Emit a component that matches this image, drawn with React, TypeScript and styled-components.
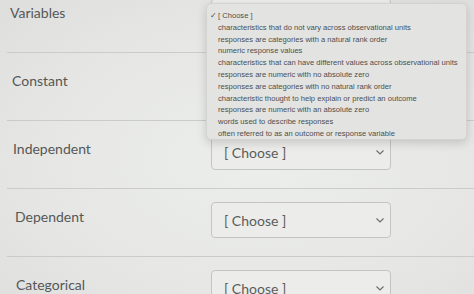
import React from "react";
import styled, { createGlobalStyle } from "styled-components";

const Global = createGlobalStyle`
  html, body { margin: 0; padding: 0; }
  body {
    width: 474px;
    height: 294px;
    overflow: hidden;
    background: #e7e8e6;
    font-family: Lato, "Open Sans", sans-serif;
  }
`;

const Page = styled.div`
  position: relative;
  width: 474px;
  height: 294px;
  overflow: hidden;
  background: radial-gradient(ellipse at 55% 55%, #eceeec 0%, #e6e7e5 60%, #dedfdd 100%);
`;

const List = styled.div`
  display: flex;
  flex-direction: column;
  margin-top: -15px;
`;

const Row = styled.div`
  display: grid;
  grid-template-columns: 204px 180px;
  align-items: start;
  height: 67px;
  margin-left: 7px;
  border-bottom: 1px solid #cbccca;
`;

const Label = styled.div<{ $indent: number }>`
  margin-top: 10px;
  padding-left: ${(p) => p.$indent}px;
  line-height: 36px;
  font-size: 14px;
  color: #555756;
`;

const Select = styled.div`
  margin-top: 13px;
  box-sizing: border-box;
  height: 36px;
  border: 1px solid #c4c5c3;
  border-radius: 4px;
  background: #ecedeb;
  display: flex;
  align-items: center;
  justify-content: space-between;
  padding: 0 5px 0 12px;
  font-size: 14px;
  color: #5b5c5b;
`;

const Menu = styled.div`
  position: absolute;
  left: 206px;
  top: 3px;
  width: 261px;
  height: 137px;
  box-sizing: border-box;
  padding: 6px 0 0 11px;
  background: #e3e4e2;
  border: 1px solid #d3d4d2;
  border-radius: 5px;
  box-shadow: 0 3px 10px rgba(0, 0, 0, 0.16);
  font-family: "Liberation Sans", Arial, sans-serif;
  font-size: 7.6px;
  color: #4d4e4d;
`;

const Item = styled.div`
  position: relative;
  line-height: 11.8px;
  white-space: nowrap;
`;

const Check = styled.span`
  position: absolute;
  left: -8px;
  top: 0;
`;

const Chevron = () => (
  <svg width="10" height="7" viewBox="0 0 10 7">
    <path d="M1.5 1.5 L5 5 L8.5 1.5" fill="none" stroke="#6a6b6a" strokeWidth="1.1" />
  </svg>
);

const rows = [
  { label: "Variables", indent: 3 },
  { label: "Constant", indent: 5 },
  { label: "Independent", indent: 6 },
  { label: "Dependent", indent: 8 },
  { label: "Categorical", indent: 9 },
];

const options = [
  "characteristics that do not vary across observational units",
  "responses are categories with a natural rank order",
  "numeric response values",
  "characteristics that can have different values across observational units",
  "responses are numeric with no absolute zero",
  "responses are categories with no natural rank order",
  "characteristic thought to help explain or predict an outcome",
  "responses are numeric with an absolute zero",
  "words used to describe responses",
  "often referred to as an outcome or response variable",
];

export default function App() {
  return (
    <>
      <Global />
      <Page>
        <List>
          {rows.map((r) => (
            <Row key={r.label}>
              <Label $indent={r.indent}>{r.label}</Label>
              <Select>
                <span>[ Choose ]</span>
                <Chevron />
              </Select>
            </Row>
          ))}
        </List>
        <Menu>
          <Item>
            <Check>✓</Check>[ Choose ]
          </Item>
          {options.map((o) => (
            <Item key={o}>{o}</Item>
          ))}
        </Menu>
      </Page>
    </>
  );
}
